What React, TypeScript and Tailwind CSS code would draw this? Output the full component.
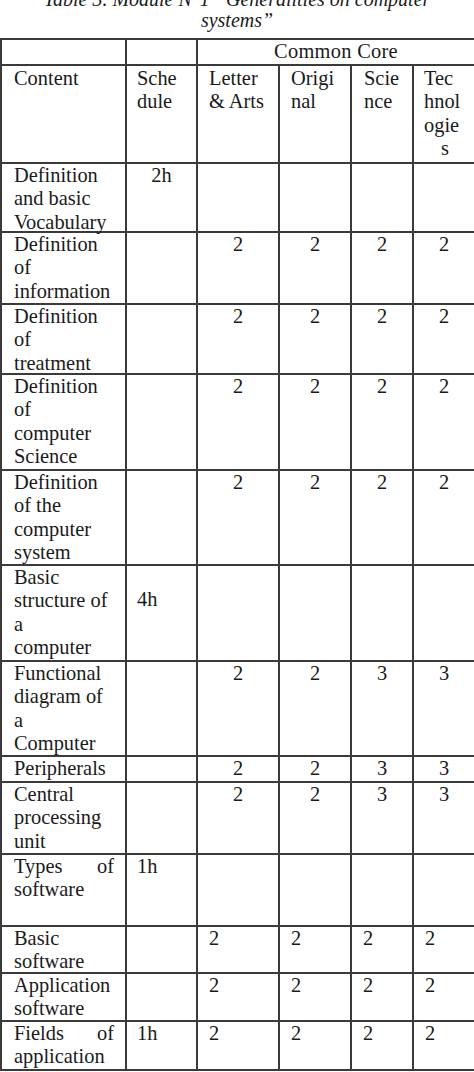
import React from "react"

type Row = {
  content: React.ReactNode
  h: number
  schedule?: string
  schedAlign?: "center" | "left" | "second"
  vals?: string[]
  valsAlign?: "center" | "left"
  justify?: boolean
}

const rows: Row[] = [
  { content: <>Definition<br />and basic<br />Vocabulary</>, h: 69, schedule: "2h", schedAlign: "center" },
  { content: <>Definition<br />of<br />information</>, h: 72, vals: ["2", "2", "2", "2"], valsAlign: "center" },
  { content: <>Definition<br />of<br />treatment</>, h: 70, vals: ["2", "2", "2", "2"], valsAlign: "center" },
  { content: <>Definition<br />of<br />computer<br />Science</>, h: 96, vals: ["2", "2", "2", "2"], valsAlign: "center" },
  { content: <>Definition<br />of the<br />computer<br />system</>, h: 95, vals: ["2", "2", "2", "2"], valsAlign: "center" },
  { content: <>Basic<br />structure of<br />a<br />computer</>, h: 96, schedule: "4h", schedAlign: "second" },
  { content: <>Functional<br />diagram of<br />a<br />Computer</>, h: 95, vals: ["2", "2", "3", "3"], valsAlign: "center" },
  { content: <>Peripherals</>, h: 26, vals: ["2", "2", "3", "3"], valsAlign: "center" },
  { content: <>Central<br />processing<br />unit</>, h: 72, vals: ["2", "2", "3", "3"], valsAlign: "center" },
  { content: "Types of software", h: 72, schedule: "1h", schedAlign: "left", justify: true },
  { content: <>Basic<br />software</>, h: 47, vals: ["2", "2", "2", "2"], valsAlign: "left" },
  { content: <>Application<br />software</>, h: 48, vals: ["2", "2", "2", "2"], valsAlign: "left" },
  { content: "Fields of application", h: 49, schedule: "1h", schedAlign: "left", vals: ["2", "2", "2", "2"], valsAlign: "left", justify: true },
]

const cell = "border-2 border-[#3a3a3a] align-top p-0"

export default function App() {
  return (
    <div className="w-[474px] h-[1072px] overflow-hidden bg-white text-[#1a1a1a] font-['Liberation_Serif','Times_New_Roman',serif]">
      <p className="-mt-[11px] mb-[7px] text-center text-[20px] leading-[21px] italic px-[38px]">
        Table 3. Module N°1 “Generalities on computer systems”
      </p>
      <table className="w-[474px] table-fixed border-collapse text-[20.4px] leading-[23.3px]">
        <colgroup>
          <col className="w-[125px]" />
          <col className="w-[71px]" />
          <col className="w-[82px]" />
          <col className="w-[72px]" />
          <col className="w-[62px]" />
          <col className="w-[62px]" />
        </colgroup>
        <tbody>
          <tr>
            <td className={cell}><div className="h-[24px]" /></td>
            <td className={cell}></td>
            <td colSpan={4} className={`${cell} text-center tracking-[0.3px]`}>
              <div className="h-[24px]">Common Core</div>
            </td>
          </tr>
          <tr>
            <td className={`${cell} pl-[12px] pt-[1px]`}><div className="h-[95px]">Content</div></td>
            <td className={`${cell} pl-[10px] pt-[1px]`}>Sche<br />dule</td>
            <td className={`${cell} pl-[11px] pt-[1px]`}>Letter<br />&amp; Arts</td>
            <td className={`${cell} pl-[11px] pt-[1px]`}>Origi<br />nal</td>
            <td className={`${cell} pl-[12px] pt-[1px]`}>Scie<br />nce</td>
            <td className={`${cell} pl-[10px] pt-[1px]`}>
              Tec<br />hnol<br />ogie<br /><span className="block text-center pr-[8px]">s</span>
            </td>
          </tr>
          {rows.map((r, i) => (
            <tr key={i}>
              <td className={`${cell} pl-[12px] pr-[11px] ${r.justify ? "text-justify" : ""}`}>
                <div style={{ height: r.h - 2 }}>{r.content}</div>
              </td>
              <td
                className={`${cell} ${
                  r.schedAlign === "center" ? "text-center" : "pl-[10px]"
                } ${r.schedAlign === "second" ? "pt-[22px]" : ""}`}
              >
                {r.schedule}
              </td>
              {[0, 1, 2, 3].map((j) => (
                <td
                  key={j}
                  className={`${cell} ${r.valsAlign === "center" ? "text-center" : "pl-[11px]"}`}
                >
                  {r.vals ? r.vals[j] : ""}
                </td>
              ))}
            </tr>
          ))}
        </tbody>
      </table>
    </div>
  )
}
